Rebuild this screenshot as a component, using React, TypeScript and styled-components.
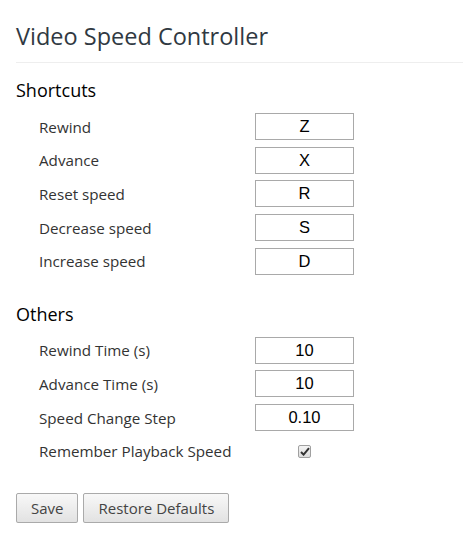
import styled, { createGlobalStyle } from "styled-components";

const GlobalStyle = createGlobalStyle`
  html, body {
    margin: 0;
    padding: 0;
    background: #ffffff;
  }
  body {
    font-family: "Open Sans", "Noto Sans", sans-serif;
    color: #333333;
  }
`;

const shortcuts = [
  { label: "Rewind", key: "Z" },
  { label: "Advance", key: "X" },
  { label: "Reset speed", key: "R" },
  { label: "Decrease speed", key: "S" },
  { label: "Increase speed", key: "D" },
];

const others = [
  { label: "Rewind Time (s)", value: "10" },
  { label: "Advance Time (s)", value: "10" },
  { label: "Speed Change Step", value: "0.10" },
];

export default function App() {
  return (
    <Page>
      <GlobalStyle />
      <Header>
        <Title>Video Speed Controller</Title>
      </Header>

      <Section>
        <SectionTitle>Shortcuts</SectionTitle>
        <Rows>
          {shortcuts.map((s) => (
            <Row key={s.label}>
              <Label>{s.label}</Label>
              <KeyInput type="text" defaultValue={s.key} readOnly />
            </Row>
          ))}
        </Rows>
      </Section>

      <Section $spaced>
        <SectionTitle>Others</SectionTitle>
        <Rows>
          {others.map((o) => (
            <Row key={o.label}>
              <Label>{o.label}</Label>
              <KeyInput type="text" defaultValue={o.value} readOnly />
            </Row>
          ))}
          <Row>
            <Label>Remember Playback Speed</Label>
            <CheckCell>
              <CheckBox>
                <svg width="10" height="9" viewBox="0 0 10 9">
                  <path
                    d="M1 5 L3.6 7.6 L9 1.2"
                    fill="none"
                    stroke="#333"
                    strokeWidth="2"
                  />
                </svg>
              </CheckBox>
            </CheckCell>
          </Row>
        </Rows>
      </Section>

      <Actions>
        <Button>Save</Button>
        <Button>Restore Defaults</Button>
      </Actions>
    </Page>
  );
}

const Page = styled.div`
  width: 463px;
  padding: 0 0 0 16px;
  box-sizing: border-box;
`;

const Header = styled.header`
  height: 63px;
  border-bottom: 1px solid #eeeeee;
  display: flex;
  align-items: flex-start;
  padding-top: 18px;
  box-sizing: border-box;
`;

const Title = styled.h1`
  margin: 0;
  font-size: 23.5px;
  font-weight: 400;
  line-height: 36px;
  color: #303942;
`;

const Section = styled.section<{ $spaced?: boolean }>`
  margin-top: ${(p) => (p.$spaced ? "26px" : "14px")};
`;

const SectionTitle = styled.h3`
  margin: 0;
  font-size: 18px;
  font-weight: 400;
  line-height: 26px;
  color: #000000;
`;

const Rows = styled.div`
  display: flex;
  flex-direction: column;
  gap: 6.7px;
  padding: 10px 0 0 23px;
`;

const Row = styled.div`
  display: grid;
  grid-template-columns: 216px 99px;
  align-items: center;
  height: 27px;
`;

const Label = styled.span`
  font-size: 15.2px;
  color: #333333;
`;

const KeyInput = styled.input`
  box-sizing: border-box;
  width: 99px;
  height: 27px;
  border: 1px solid #a9a9a9;
  padding: 0;
  text-align: center;
  font-family: "Liberation Sans", Arial, sans-serif;
  font-size: 16.5px;
  color: #000000;
  outline: none;
`;

const CheckCell = styled.div`
  display: flex;
  justify-content: center;
`;

const CheckBox = styled.span`
  box-sizing: border-box;
  width: 13px;
  height: 13px;
  border: 1px solid #a0a0a0;
  border-radius: 2px;
  background: linear-gradient(#f4f4f4, #dcdcdc);
  display: flex;
  align-items: center;
  justify-content: center;
`;

const Actions = styled.div`
  display: flex;
  gap: 5px;
  margin-top: 28px;
`;

const Button = styled.button`
  box-sizing: border-box;
  height: 30px;
  padding: 0 14px;
  border: 1px solid #aaaaaa;
  border-radius: 2px;
  background: linear-gradient(#f8f8f8, #e2e2e2);
  box-shadow: 0 1px 0 rgba(0, 0, 0, 0.08);
  font-family: "Open Sans", "Noto Sans", sans-serif;
  font-size: 15px;
  color: #444444;
`;
